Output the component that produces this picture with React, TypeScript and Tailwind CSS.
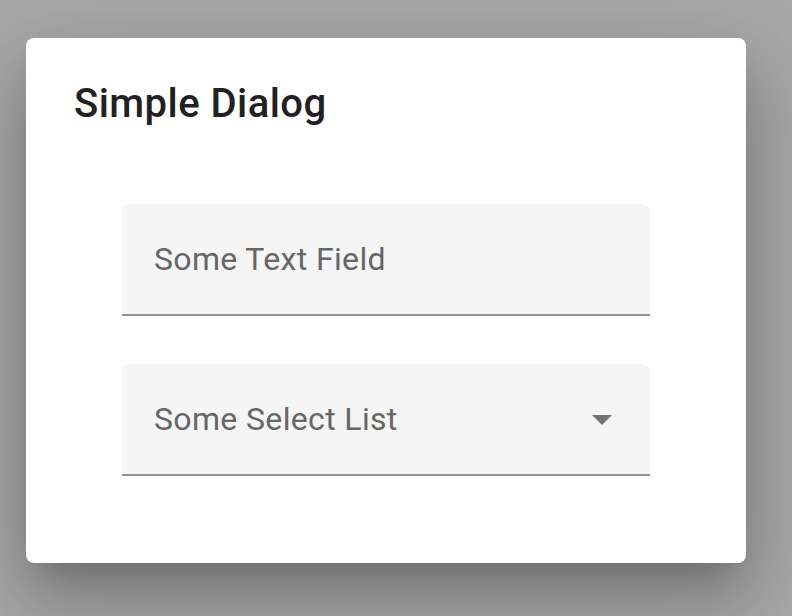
import { useState } from 'react';

function ArrowDropDown() {
  return (
    <svg viewBox="0 0 24 24" className="h-12 w-12 fill-[#757575]" aria-hidden="true">
      <path d="M7 10l5 5 5-5z" />
    </svg>
  );
}

function FilledField({ label, select }: { label: string; select?: boolean }) {
  return (
    <div className="flex h-[112px] w-full items-center justify-between rounded-t-[8px] border-b-2 border-[#949494] bg-[#f5f5f5] pl-[32px] pr-[24px]">
      <span className="text-[32px] tracking-[0.35px] text-[#666666]">{label}</span>
      {select && <ArrowDropDown />}
    </div>
  );
}

export default function App() {
  const [open] = useState(true);

  return (
    <div
      className="h-[616px] w-[792px] overflow-hidden bg-[#a9a9a9] pl-[26px] pt-[38px]"
      style={{ fontFamily: 'Roboto, "Noto Sans", sans-serif' }}
    >
      {open && (
        <div className="flex h-[525px] w-[720px] flex-col rounded-[8px] bg-white shadow-[0_22px_30px_-14px_rgba(0,0,0,0.2),0_48px_76px_6px_rgba(0,0,0,0.14),0_18px_92px_16px_rgba(0,0,0,0.12)]">
          <h2 className="px-[48px] pt-[34px] text-[40px] font-medium leading-[64px] tracking-[0.45px] text-[#212121]">
            Simple Dialog
          </h2>
          <div className="flex flex-col gap-[48px] px-[96px] pt-[68px]">
            <FilledField label="Some Text Field" />
            <FilledField label="Some Select List" select />
          </div>
        </div>
      )}
    </div>
  );
}
